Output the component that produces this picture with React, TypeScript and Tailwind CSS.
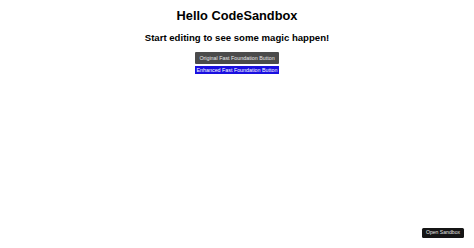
import React from "react";

export default function App() {
  return (
    <div className="relative min-h-[248px] w-full bg-white text-center text-black font-['Liberation_Sans',Arial,sans-serif]">
      <h1 className="pt-[8.6px] text-[12.8px] font-bold leading-[14.7px]">Hello CodeSandbox</h1>
      <h2 className="mt-[8.4px] text-[9.6px] font-bold leading-[11px]">Start editing to see some magic happen!</h2>
      <div className="mt-[9px] flex flex-col items-center">
        <button className="h-[12px] rounded-[1px] bg-[#4b4b4b] px-[4px] text-[5.33px] leading-[12px] text-[#e8e8e8]">
          Original Fast Foundation Button
        </button>
        <button className="mt-[2.6px] h-[8px] bg-[#1a0fe0] px-[2px] text-[5.33px] leading-[8px] text-white">
          Enhanced Fast Foundation Button
        </button>
      </div>
      <a className="absolute bottom-[10px] right-[10px] flex h-[10px] w-[42px] items-center justify-center rounded-[1.5px] bg-[#151515] text-[5.12px] text-[#e6e6e6]">
        Open Sandbox
      </a>
    </div>
  );
}
